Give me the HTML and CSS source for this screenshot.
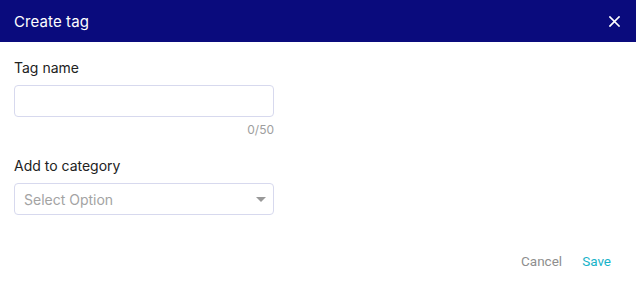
FILE: index.html
```html
<!DOCTYPE html>
<html>
<head>
<meta charset="utf-8">
<link rel="stylesheet" href="styles.css">
</head>
<body>
<div class="dialog">
  <header class="header">
    <h1 class="title">Create tag</h1>
    <button class="close" aria-label="Close">
      <svg width="11" height="11" viewBox="0 0 11 11"><path d="M1 1L10 10M10 1L1 10" stroke="#fff" stroke-width="1.7" stroke-linecap="square"/></svg>
    </button>
  </header>
  <main class="body">
    <div class="field">
      <label class="label">Tag name</label>
      <input class="input" type="text">
      <div class="counter">0/50</div>
    </div>
    <div class="field field-second">
      <label class="label">Add to category</label>
      <div class="select">
        <span class="placeholder">Select Option</span>
        <span class="caret"></span>
      </div>
    </div>
  </main>
  <footer class="footer">
    <button class="btn btn-cancel">Cancel</button>
    <button class="btn btn-save">Save</button>
  </footer>
</div>
</body>
</html>
```
FILE: styles.css
```css
* { box-sizing: border-box; }
html, body { margin: 0; padding: 0; background: #fff; }
body { font-family: Inter, "Liberation Sans", sans-serif; width: 636px; height: 288px; overflow: hidden; }
.dialog { display: flex; flex-direction: column; height: 288px; }
.header {
  height: 42px;
  background: #0a0b7d;
  display: flex;
  align-items: center;
  justify-content: space-between;
  padding: 0 16px 0 14px;
}
.title { margin: 0; color: #fff; font-size: 15px; font-weight: 400; letter-spacing: 0.1px; }
.close { background: none; border: 0; padding: 0; width: 11px; height: 11px; display: flex; }
.body { padding: 17px 14px 0; flex: 1; }
.field { display: flex; flex-direction: column; width: 260px; }
.label { font-size: 14px; color: #222; line-height: 17px; }
.input {
  margin-top: 9px;
  height: 32px;
  border: 1px solid #d7d9ee;
  border-radius: 4px;
  outline: none;
  font: inherit;
}
.counter { align-self: flex-end; font-size: 12px; color: #9e9e9e; margin-top: 5px; line-height: 15px; }
.field-second { margin-top: 20px; }
.select {
  margin-top: 9px;
  height: 32px;
  border: 1px solid #d7d9ee;
  border-radius: 4px;
  display: flex;
  align-items: center;
  justify-content: space-between;
  padding: 0 7px 0 9px;
}
.placeholder { font-size: 14px; color: #a3a3a3; }
.caret { width: 0; height: 0; border-left: 5px solid transparent; border-right: 5px solid transparent; border-top: 5px solid #999; }
.footer { display: flex; justify-content: flex-end; gap: 20px; padding: 0 25px 19px 0; }
.btn { background: none; border: 0; padding: 0; font-family: Roboto, "Liberation Sans", sans-serif; font-size: 13.5px; cursor: pointer; }
.btn-cancel { color: #8e8e8e; }
.btn-save { color: #17b3c9; }
```
